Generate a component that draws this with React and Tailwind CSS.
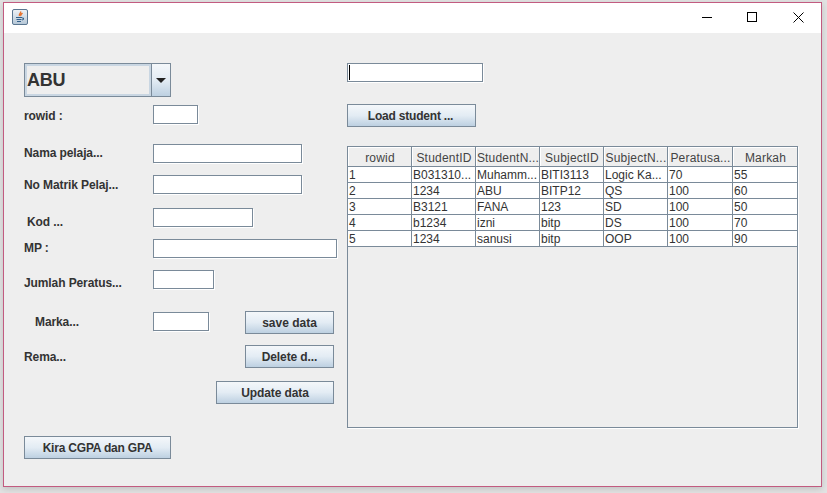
const headers = [
  { label: "rowid", w: "w-[64px]" },
  { label: "StudentID", w: "w-[64px]" },
  { label: "StudentN...", w: "w-[64px]" },
  { label: "SubjectID", w: "w-[64px]" },
  { label: "SubjectN...", w: "w-[64px]" },
  { label: "Peratusa...", w: "w-[65px]" },
  { label: "Markah", w: "w-[65px]" },
]

const rows = [
  ["1", "B031310...", "Muhamm...", "BITI3113", "Logic Ka...", "70", "55"],
  ["2", "1234", "ABU", "BITP12", "QS", "100", "60"],
  ["3", "B3121", "FANA", "123", "SD", "100", "50"],
  ["4", "b1234", "izni", "bitp", "DS", "100", "70"],
  ["5", "1234", "sanusi", "bitp", "OOP", "100", "90"],
]

function JavaIcon() {
  return (
    <svg width="16" height="16" viewBox="0 0 16 16" className="mb-[2px]">
      <defs>
        <linearGradient id="jv" x1="0" y1="0" x2="0" y2="1">
          <stop offset="0" stopColor="#eef2f6" />
          <stop offset="1" stopColor="#b4c6d6" />
        </linearGradient>
      </defs>
      <rect x="0.5" y="0.5" width="15" height="15" rx="1.5" fill="url(#jv)" stroke="#5a7690" />
      <path d="M8.500 2.500c1 1.500-2 2.500-1 4.500M10.500 4c-1 1-2.500 1.500-1.500 3" fill="none" stroke="#e8702a" strokeWidth="1.400" />
      <path d="M4 8.500h6M4.500 10.500h5M5 12.500h4M10 9h1.500v1.500L10 11" fill="none" stroke="#34608a" strokeWidth="1" />
    </svg>
  )
}

function Field({ w, className = "" }) {
  return <div className={`h-[19px] bg-white border border-[#7a8a99] shadow-[1px_1px_0_#ffffff] ${w} ${className}`} />
}

function MetalButton({ children, w, className = "" }) {
  return (
    <button className={`h-[23px] shrink-0 border border-[#7a8a99] bg-gradient-to-b from-[#f4f7fa] via-[#e3ecf4] to-[#bdd0e1] text-[12px] font-bold text-[#333333] ${w} ${className}`}>
      {children}
    </button>
  )
}

function FormRow({ label, labelClass = "", field, className = "" }) {
  return (
    <div className={`flex items-center h-[19px] ${className}`}>
      <div className={`w-[129px] text-[12px] font-bold tracking-[-0.1px] text-[#333333] whitespace-nowrap ${labelClass}`}>{label}</div>
      {field}
    </div>
  )
}

export default function App() {
  return (
    <div className="w-[827px] h-[493px] overflow-hidden bg-[#e2e2e2] pl-[3px] pt-[2px] font-['Liberation_Sans',Arial,sans-serif]">
      <div className="w-[819px] h-[485px] border border-[#c25b80] flex flex-col bg-[#eeeeee] shadow-[0_2px_6px_rgba(0,0,0,0.15)]">
        {/* title bar */}
        <div className="h-[30px] shrink-0 bg-white flex items-center justify-between pl-[8px]">
          <JavaIcon />
          <div className="flex items-center mb-[2px]">
            <div className="w-[46px] h-[30px] pl-[2px] flex items-center justify-center">
              <div className="w-[10px] h-px bg-black" />
            </div>
            <div className="w-[46px] h-[30px] flex items-center justify-center">
              <div className="w-[10px] h-[10px] border border-black" />
            </div>
            <div className="w-[46px] h-[30px] flex items-center justify-center">
              <svg width="11" height="11" viewBox="0 0 11 11">
                <path d="M0.500 0.500l10 10M10.500 0.500l-10 10" stroke="#000000" strokeWidth="1" fill="none" />
              </svg>
            </div>
          </div>
        </div>

        <div className="flex flex-1 pl-[20px]">
          {/* left form */}
          <div className="w-[323px] shrink-0 flex flex-col pt-[30px]">
            <div className="flex w-[147px] h-[34px] border border-[#7a8a99]">
              <div className="flex-1 border-2 border-[#c9d6e2] bg-[#eeeeee] flex items-center text-[18px] font-bold tracking-[-0.2px] text-[#333333]">ABU</div>
              <div className="w-[19px] border-l border-[#7a8a99] bg-gradient-to-b from-[#f4f7fa] via-[#e3ecf4] to-[#bdd0e1] flex items-center justify-center">
                <div className="w-0 h-0 border-x-[5px] border-x-transparent border-t-[5px] border-t-[#222222]" />
              </div>
            </div>

            <FormRow className="mt-[8px]" label="rowid :" labelClass="translate-y-[1px]" field={<Field w="w-[45px]" />} />
            <FormRow className="mt-[20px]" label="Nama pelaja..." labelClass="-translate-y-[1px]" field={<Field w="w-[149px]" />} />
            <FormRow className="mt-[12px]" label="No Matrik Pelaj..." field={<Field w="w-[149px]" />} />
            <FormRow className="mt-[14px]" label="Kod ..." labelClass="pl-[3px] translate-y-[4px]" field={<Field w="w-[100px]" />} />
            <FormRow className="mt-[12px]" label="MP :" labelClass="-translate-y-[1px]" field={<Field w="w-[184px]" />} />
            <FormRow className="mt-[12px]" label="Jumlah Peratus..." labelClass="translate-y-[3px]" field={<Field w="w-[61px]" />} />

            <div className="flex items-start h-[23px] mt-[22px]">
              <div className="w-[129px] pl-[11px] text-[12px] leading-[23px] font-bold tracking-[-0.1px] text-[#333333]">Marka...</div>
              <Field w="w-[56px]" className="mt-[1px]" />
              <MetalButton w="w-[89px]" className="ml-[36px]">save data</MetalButton>
            </div>
            <div className="flex items-center justify-between h-[23px] mt-[11px] w-[310px]">
              <div className="text-[12px] font-bold tracking-[-0.1px] text-[#333333]">Rema...</div>
              <MetalButton w="w-[89px]" className="tracking-[-0.1px]">Delete d...</MetalButton>
            </div>
            <div className="flex justify-end mt-[13px] w-[310px]">
              <MetalButton w="w-[118px]" className="tracking-[-0.1px]">Update data</MetalButton>
            </div>
            <MetalButton w="w-[147px]" className="mt-[32px] tracking-[-0.2px]">Kira CGPA dan GPA</MetalButton>
          </div>

          {/* right side */}
          <div className="flex flex-col pt-[30px]">
            <div className="w-[136px] h-[19px] bg-white border border-[#7a8a99] shadow-[1px_1px_0_#ffffff] flex items-center pl-[1px]">
              <div className="w-px h-[15px] bg-black" />
            </div>
            <MetalButton w="w-[129px]" className="mt-[22px] tracking-[-0.2px] pr-[2px]">Load student ...</MetalButton>

            <div className="mt-[19px] w-[451px] h-[282px] border border-[#7a8a99] bg-[#eeeeee] shadow-[1px_1px_0_#ffffff]">
              <div className="flex h-[20px]">
                {headers.map((h) => (
                  <div
                    key={h.label}
                    className={`${h.w} shrink-0 border-r border-b border-[#7a8a99] bg-[#eeeeee] shadow-[inset_1px_1px_0_#ffffff] pt-[2px] pl-[1px] flex items-center justify-center text-[12px] tracking-[0.2px] text-[#444444] whitespace-nowrap overflow-hidden`}
                  >
                    {h.label}
                  </div>
                ))}
              </div>
              {rows.map((row) => (
                <div key={row[0]} className="flex h-[16px] bg-white">
                  {row.map((cell, i) => (
                    <div
                      key={i}
                      className={`${headers[i].w} shrink-0 border-r border-b border-[#7a8a99] pl-[1px] text-[12px] leading-[17px] text-[#333333] whitespace-nowrap overflow-hidden`}
                    >
                      {cell}
                    </div>
                  ))}
                </div>
              ))}
            </div>
          </div>
        </div>
      </div>
    </div>
  )
}
